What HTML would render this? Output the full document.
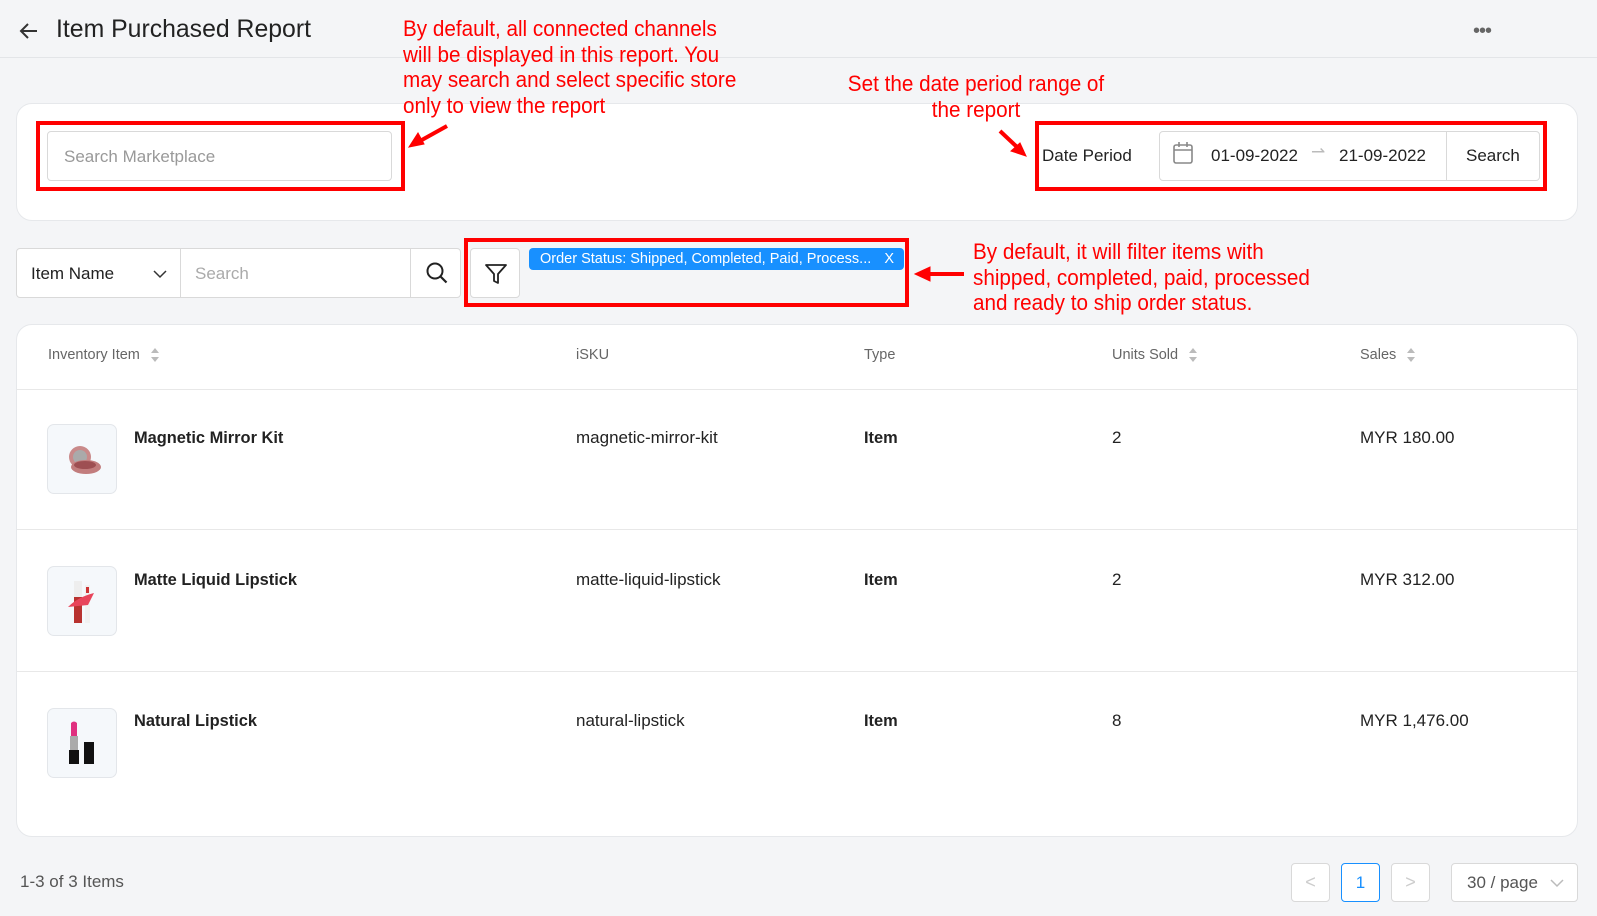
<!DOCTYPE html>
<html><head><meta charset="utf-8"><style>
*{box-sizing:border-box;margin:0;padding:0}
body{width:1597px;height:916px;background:#f4f5f7;font-family:"Liberation Sans",sans-serif;color:#222;position:relative;overflow:hidden}
.a{position:absolute}
.card{position:absolute;background:#fff;border:1px solid #e6e8eb;border-radius:16px}
.box{position:absolute;border:1px solid #d9d9d9;border-radius:4px;background:#fff}
.red{position:absolute;border:4px solid #f00}
.note{position:absolute;font-family:"Liberation Sans Narrow","Liberation Sans",sans-serif;color:#f00;font-size:22px;line-height:25.5px;white-space:nowrap;transform:scaleX(0.94);transform-origin:left top}
.th{position:absolute;top:347px;font-size:14.5px;color:#666}
.td{position:absolute;font-size:17px;color:#222}
.b{font-size:16.4px;font-weight:bold}
.thumb{position:absolute;left:47px;width:70px;height:70px;border:1px solid #e3e6ea;border-radius:7px;background:#f5f8fb}
.sort{display:inline-block;vertical-align:middle;margin-left:10px}
.line{position:absolute;left:17px;width:1560px;height:1px;background:#e8e8e8}
</style></head><body>
<svg class="a" style="left:18px;top:20px" width="22" height="22" viewBox="0 0 22 22"><path d="M19 11H4M10 4l-7 7 7 7" fill="none" stroke="#333" stroke-width="2"/></svg>
<div class="a" style="left:56px;top:16px;font-size:24.8px;color:#222">Item Purchased Report</div>
<div class="a" style="left:1473px;top:20px;font-size:20px;color:#666;letter-spacing:-1px">•••</div>
<div class="a" style="left:0;top:57px;width:1597px;height:1px;background:#e3e5e8"></div>

<div class="card" style="left:16px;top:103px;width:1562px;height:118px"></div>
<div class="box" style="left:47px;top:131px;width:345px;height:50px"></div>
<div class="a" style="left:64px;top:147px;font-size:17px;color:#999">Search Marketplace</div>
<div class="red" style="left:36px;top:121px;width:369px;height:70px"></div>
<div class="a" style="left:1042px;top:146px;font-size:17px;color:#222">Date Period</div>
<div class="box" style="left:1159px;top:131px;width:381px;height:50px"></div>
<div class="a" style="left:1446px;top:131px;width:1px;height:50px;background:#d9d9d9"></div>
<svg class="a" style="left:1172px;top:141px" width="22" height="24" viewBox="0 0 22 24"><rect x="2" y="4" width="18" height="18" rx="2" fill="none" stroke="#888" stroke-width="1.6"/><path d="M2 9h18M7 1v5M15 1v5" stroke="#888" stroke-width="1.6"/></svg>
<div class="a" style="left:1211px;top:146px;font-size:17px">01-09-2022</div>
<div class="a" style="left:1311px;top:142px;font-size:17px;color:#bbb">⇀</div>
<div class="a" style="left:1339px;top:146px;font-size:17px">21-09-2022</div>
<div class="a" style="left:1466px;top:146px;font-size:17px">Search</div>
<div class="red" style="left:1035px;top:121px;width:512px;height:70px"></div>

<div class="box" style="left:16px;top:248px;width:445px;height:50px"></div>
<div class="a" style="left:180px;top:248px;width:1px;height:50px;background:#d9d9d9"></div>
<div class="a" style="left:410px;top:248px;width:1px;height:50px;background:#d9d9d9"></div>
<div class="a" style="left:31px;top:264px;font-size:17px">Item Name</div>
<svg class="a" style="left:153px;top:269px" width="14" height="10" viewBox="0 0 14 10"><path d="M1 2l6 6 6-6" fill="none" stroke="#333" stroke-width="1.5"/></svg>
<div class="a" style="left:195px;top:264px;font-size:17px;color:#aaa">Search</div>
<svg class="a" style="left:425px;top:261px" width="24" height="24" viewBox="0 0 24 24"><circle cx="10" cy="10" r="7.5" fill="none" stroke="#222" stroke-width="2"/><path d="M15.5 15.5l6 6" stroke="#222" stroke-width="2.2"/></svg>
<div class="box" style="left:470px;top:248px;width:50px;height:50px"></div>
<svg class="a" style="left:484px;top:262px" width="24" height="24" viewBox="0 0 24 24"><path d="M2 3h20l-8 9v9l-4-2v-7z" fill="none" stroke="#222" stroke-width="1.8" stroke-linejoin="round"/></svg>
<div class="a" style="left:529px;top:248px;width:375px;height:22px;background:#1890ff;border-radius:4px;color:#fff;font-size:14.5px;line-height:22px;padding-left:11px">Order Status: Shipped, Completed, Paid, Process...<span style="position:absolute;right:10px">X</span></div>
<div class="red" style="left:464px;top:238px;width:445px;height:69px"></div>

<div class="card" style="left:16px;top:324px;width:1562px;height:513px"></div>
<div class="th" style="left:48px">Inventory Item<svg class="sort" width="10" height="16" viewBox="0 0 10 16"><path d="M5 1l4 5H1zM5 15l4-5H1z" fill="#bbb"/></svg></div>
<div class="th" style="left:576px">iSKU</div>
<div class="th" style="left:864px">Type</div>
<div class="th" style="left:1112px">Units Sold<svg class="sort" width="10" height="16" viewBox="0 0 10 16"><path d="M5 1l4 5H1zM5 15l4-5H1z" fill="#bbb"/></svg></div>
<div class="th" style="left:1360px">Sales<svg class="sort" width="10" height="16" viewBox="0 0 10 16"><path d="M5 1l4 5H1zM5 15l4-5H1z" fill="#bbb"/></svg></div>
<div class="line" style="top:389px"></div>
<div class="line" style="top:529px"></div>
<div class="line" style="top:671px"></div>

<div class="thumb" style="top:424px"><svg width="70" height="70" viewBox="0 0 70 70"><circle cx="32" cy="32" r="11" fill="#c98a8a"/><circle cx="32" cy="32" r="7" fill="#aaa"/><ellipse cx="38" cy="42" rx="15" ry="7" fill="#c27d7d"/><ellipse cx="37" cy="40" rx="11" ry="4" fill="#9e4f52"/></svg></div>
<div class="thumb" style="top:566px"><svg width="70" height="70" viewBox="0 0 70 70"><rect x="26" y="14" width="8" height="42" fill="#eee"/><rect x="26" y="30" width="8" height="26" fill="#b8322f"/><rect x="37" y="18" width="5" height="38" fill="#f1f1f1"/><rect x="38" y="20" width="3" height="6" fill="#c33"/><path d="M20 40q10-10 26-14l-6 12z" fill="#e8445a"/></svg></div>
<div class="thumb" style="top:708px"><svg width="70" height="70" viewBox="0 0 70 70"><path d="M23 14q3-3 6 0v14h-6z" fill="#e0307f"/><rect x="22" y="27" width="8" height="14" fill="#aaa"/><rect x="21" y="41" width="10" height="14" fill="#111"/><rect x="36" y="33" width="10" height="22" fill="#111"/></svg></div>

<div class="td b" style="left:134px;top:429px">Magnetic Mirror Kit</div>
<div class="td" style="left:576px;top:428px">magnetic-mirror-kit</div>
<div class="td b" style="left:864px;top:429px">Item</div>
<div class="td" style="left:1112px;top:428px">2</div>
<div class="td" style="left:1360px;top:428px">MYR 180.00</div>

<div class="td b" style="left:134px;top:571px">Matte Liquid Lipstick</div>
<div class="td" style="left:576px;top:570px">matte-liquid-lipstick</div>
<div class="td b" style="left:864px;top:571px">Item</div>
<div class="td" style="left:1112px;top:570px">2</div>
<div class="td" style="left:1360px;top:570px">MYR 312.00</div>

<div class="td b" style="left:134px;top:712px">Natural Lipstick</div>
<div class="td" style="left:576px;top:711px">natural-lipstick</div>
<div class="td b" style="left:864px;top:712px">Item</div>
<div class="td" style="left:1112px;top:711px">8</div>
<div class="td" style="left:1360px;top:711px">MYR 1,476.00</div>

<div class="a" style="left:20px;top:872px;font-size:17px;color:#555">1-3 of 3 Items</div>
<div class="box" style="left:1291px;top:863px;width:39px;height:39px;color:#ccc;text-align:center;line-height:37px;font-size:18px">&lt;</div>
<div class="box" style="left:1341px;top:863px;width:39px;height:39px;border-color:#1890ff;color:#1890ff;text-align:center;line-height:37px;font-size:17px">1</div>
<div class="box" style="left:1391px;top:863px;width:39px;height:39px;color:#ccc;text-align:center;line-height:37px;font-size:18px">&gt;</div>
<div class="box" style="left:1451px;top:863px;width:127px;height:39px;font-size:17px;line-height:37px;padding-left:15px;color:#555">30 / page</div>
<svg class="a" style="left:1550px;top:878px" width="14" height="10" viewBox="0 0 14 10"><path d="M1 2l6 6 6-6" fill="none" stroke="#bbb" stroke-width="1.5"/></svg>

<div class="note" style="left:403px;top:16px">By default, all connected channels<br>will be displayed in this report. You<br>may search and select specific store<br>only to view the report</div>
<div class="note" style="left:826px;top:71px;width:300px;text-align:center;transform-origin:center top">Set the date period range of<br>the report</div>
<div class="note" style="left:973px;top:239px">By default, it will filter items with<br>shipped, completed, paid, processed<br>and ready to ship order status.</div>
<svg class="a" style="left:0;top:0" width="1597" height="916">
<g stroke="#f00" stroke-width="4" fill="#f00">
<line x1="447" y1="126" x2="420" y2="141"/><path d="M409 147l9-14 6 11z" stroke-width="1"/>
<line x1="1000" y1="131" x2="1017" y2="147"/><path d="M1026 156l-15-5 9-8z" stroke-width="1"/>
<line x1="964" y1="274" x2="928" y2="274"/><path d="M915 274l15-7v14z" stroke-width="1"/>
</g></svg>
</body></html>
